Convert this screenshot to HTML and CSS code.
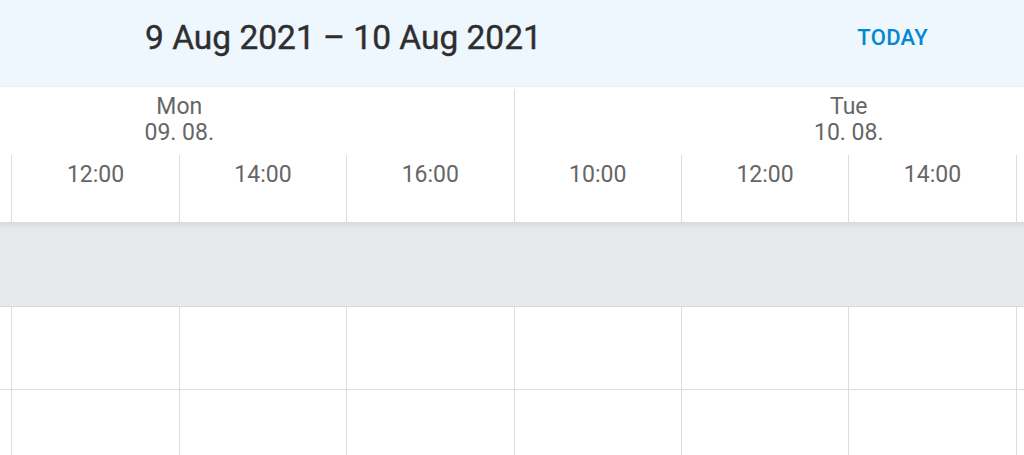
FILE: index.html
```html
<!DOCTYPE html>
<html lang="en">
<head>
  <meta charset="UTF-8" />
  <meta name="viewport" content="width=device-width, initial-scale=1.0"/>
  <title>Timeline</title>
  <link rel="stylesheet" href="styles.css">
</head>
<body>
  <!-- Toolbar -->
  <header class="toolbar">
    <h1 class="range">9 Aug 2021 – 10 Aug 2021</h1>
    <button class="today">Today</button>
  </header>

  <div class="timeline">
    <div class="track">
      <div class="days">
        <div class="day">
          <span class="day-name">Mon</span>
          <span class="day-date">09. 08.</span>
        </div>
        <div class="day">
          <span class="day-name">Tue</span>
          <span class="day-date">10. 08.</span>
        </div>
      </div>

      <!-- first and last hour are scrolled out of view -->
      <div class="hours">
        <div class="hour"></div>
        <div class="hour">12:00</div>
        <div class="hour">14:00</div>
        <div class="hour">16:00</div>
        <div class="hour">10:00</div>
        <div class="hour">12:00</div>
        <div class="hour">14:00</div>
        <div class="hour"></div>
      </div>

      <div class="band"></div>

      <div class="row">
        <div class="cell"></div><div class="cell"></div><div class="cell"></div><div class="cell"></div>
        <div class="cell"></div><div class="cell"></div><div class="cell"></div><div class="cell"></div>
      </div>
      <div class="row">
        <div class="cell"></div><div class="cell"></div><div class="cell"></div><div class="cell"></div>
        <div class="cell"></div><div class="cell"></div><div class="cell"></div><div class="cell"></div>
      </div>
    </div>
  </div>
</body>
</html>
```

FILE: styles.css
```css
body {
  margin: 0;
  font-family: Roboto, 'Noto Sans', sans-serif;
  background-color: #fff;
  overflow: hidden;
}

/* Toolbar */
.toolbar {
  display: flex;
  align-items: center;
  justify-content: space-between;
  height: 87px;
  box-sizing: border-box;
  padding: 0 96px 12px 145px;
  background-color: #eef6fe;
  border-bottom: 1px solid #e6eef5;
}

.range {
  margin: 0;
  font-size: 33.5px;
  font-weight: 400;
  color: #2e2e2e;
  -webkit-text-stroke: 0.4px #2e2e2e;
}

.today {
  border: none;
  background: none;
  padding: 0;
  font-family: inherit;
  font-size: 22px;
  font-weight: 500;
  color: #0288d1;
  text-transform: uppercase;
  letter-spacing: 0.3px;
}

/* Timeline grid */
.timeline {
  overflow: hidden;
}

.track {
  width: 1339px;
  margin-left: -155px;
}

.days {
  display: flex;
  height: 68px;
}

.day {
  flex: 1;
  display: flex;
  flex-direction: column;
  align-items: center;
  padding-top: 5px;
  margin-top: 2px;
  border-right: 1px solid #ddd;
  color: #666;
  font-size: 23px;
  line-height: 26px;
}

.hours {
  display: flex;
  height: 67px;
}

.hour {
  flex: 1;
  text-align: center;
  padding-top: 6px;
  border-right: 1px solid #ddd;
  color: #666;
  font-size: 23px;
}

.band {
  height: 84px;
  background-color: #e8e9eb;
  border-bottom: 1px solid #d9d9d9;
  box-shadow: inset 0 5px 6px -3px rgba(0, 0, 0, 0.1);
}

.row {
  display: flex;
  height: 82px;
  border-bottom: 1px solid #ddd;
}

.cell {
  flex: 1;
  border-right: 1px solid #ddd;
}
```
